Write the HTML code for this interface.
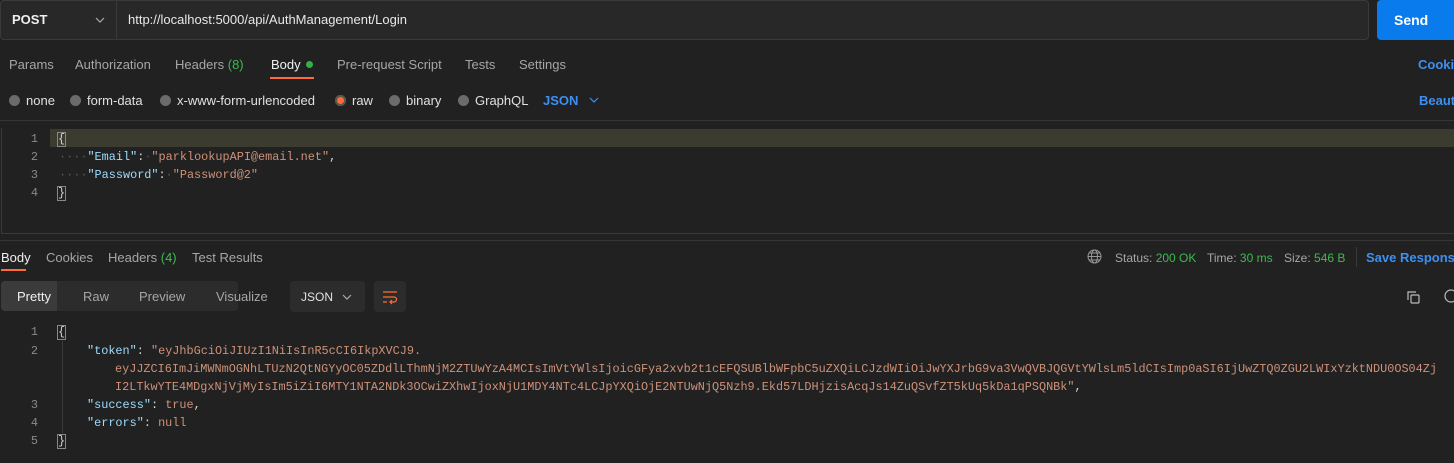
<!DOCTYPE html>
<html><head><meta charset="utf-8"><style>
*{margin:0;padding:0;box-sizing:border-box}
body{width:1454px;height:463px;background:#212121;overflow:hidden;position:relative;font-family:"Liberation Sans",sans-serif;font-size:13px;color:#a6a6a6}
.a{position:absolute;white-space:nowrap}
.mono{font-family:"Liberation Mono",monospace;font-size:11.85px}
.ln{position:absolute;width:38px;text-align:right;color:#8a8a8a;font-family:"Liberation Mono",monospace;font-size:11.85px}
.k{color:#9cdcfe}.s{color:#ce9178}.p{color:#d4d4d4}.dot{color:#555}
.rad{display:inline-block;width:11px;height:11px;border-radius:50%;background:#6b6b6b;vertical-align:-1px;margin-right:6px}
.brace{display:inline-block;border:1px solid #888;line-height:13px;color:#d4d4d4}
</style></head><body>
<!-- top bar -->
<div class="a" style="left:0;top:0;width:117px;height:40px;background:#282828;border:1px solid #3a3a3a;border-radius:4px 0 0 4px"></div>
<div class="a" style="left:12px;top:12px;color:#f0f0f0;font-weight:bold;font-size:13px">POST</div>
<svg class="a" style="left:95px;top:16px" width="10" height="8"><path d="M1 2l4 4 4-4" stroke="#aaa" fill="none" stroke-width="1.2"/></svg>
<div class="a" style="left:116px;top:0;width:1253px;height:40px;background:#282828;border:1px solid #3a3a3a;border-radius:0 4px 4px 0"></div>
<div class="a" style="left:128px;top:12px;color:#e8e8e8;font-size:13px">http://localhost:5000/api/AuthManagement/Login</div>
<div class="a" style="left:1377px;top:0;width:80px;height:40px;background:#097bed;border-radius:4px"></div>
<div class="a" style="left:1394px;top:12px;color:#fff;font-weight:bold;font-size:14px">Send</div>
<!-- tabs -->
<div class="a" style="left:9px;top:57px">Params</div>
<div class="a" style="left:75px;top:57px">Authorization</div>
<div class="a" style="left:175px;top:57px">Headers <span style="color:#3fb950">(8)</span></div>
<div class="a" style="left:271px;top:57px;color:#f0f0f0">Body <span style="display:inline-block;width:7px;height:7px;border-radius:50%;background:#2fb344;vertical-align:1px;margin-left:2px"></span></div>
<div class="a" style="left:228px;top:77px;width:0"></div>
<div class="a" style="left:270px;top:77px;width:44px;height:2px;background:#ff6c37"></div>
<div class="a" style="left:337px;top:57px">Pre-request Script</div>
<div class="a" style="left:465px;top:57px">Tests</div>
<div class="a" style="left:519px;top:57px">Settings</div>
<div class="a" style="left:1418px;top:57px;color:#3d8ff2;font-weight:bold">Cookies</div>
<!-- radios -->
<div class="a" style="left:9px;top:93px;color:#e0e0e0"><span class="rad"></span>none</div>
<div class="a" style="left:70px;top:93px;color:#e0e0e0"><span class="rad"></span>form-data</div>
<div class="a" style="left:160px;top:93px;color:#e0e0e0"><span class="rad"></span>x-www-form-urlencoded</div>
<div class="a" style="left:335px;top:93px;color:#e0e0e0"><span class="rad" style="background:#ff6c37;box-shadow:0 0 0 2px #555 inset"></span>raw</div>
<div class="a" style="left:389px;top:93px;color:#e0e0e0"><span class="rad"></span>binary</div>
<div class="a" style="left:458px;top:93px;color:#e0e0e0"><span class="rad"></span>GraphQL</div>
<div class="a" style="left:543px;top:93px;color:#3d8ff2;font-weight:bold">JSON</div>
<svg class="a" style="left:589px;top:96px" width="10" height="8"><path d="M1 2l4 4 4-4" stroke="#3d8ff2" fill="none" stroke-width="1.2"/></svg>
<div class="a" style="left:1419px;top:93px;color:#3d8ff2;font-weight:bold">Beautify</div>
<div class="a" style="left:0;top:120px;width:1454px;height:1px;background:#353535"></div>
<!-- editor -->
<div class="a" style="left:1px;top:128px;width:1px;height:106px;background:#3a3a3a"></div>
<div class="a" style="left:1px;top:233px;width:1453px;height:1px;background:#3a3a3a"></div>
<div class="a" style="left:0;top:240px;width:1454px;height:1px;background:#353535"></div>
<div class="a" style="left:50px;top:129px;width:1404px;height:18px;background:#3c3b30"></div>
<div class="ln" style="top:132px">1</div>
<div class="ln" style="top:150px">2</div>
<div class="ln" style="top:168px">3</div>
<div class="ln" style="top:186px">4</div>
<div class="a mono" style="left:57px;top:132px"><span class="brace">{</span></div>
<div class="a mono" style="left:59px;top:150px"><span class="dot">····</span><span class="k">"Email"</span><span class="p">:</span><span class="dot">·</span><span class="s">"parklookupAPI@email.net"</span><span class="p">,</span></div>
<div class="a mono" style="left:59px;top:168px"><span class="dot">····</span><span class="k">"Password"</span><span class="p">:</span><span class="dot">·</span><span class="s">"Password@2"</span></div>
<div class="a mono" style="left:57px;top:186px"><span class="brace">}</span></div>
<!-- response tabs -->
<div class="a" style="left:1px;top:250px;color:#f0f0f0">Body</div>
<div class="a" style="left:1px;top:269px;width:25px;height:2px;background:#ff6c37"></div>
<div class="a" style="left:46px;top:250px">Cookies</div>
<div class="a" style="left:108px;top:250px">Headers <span style="color:#3fb950">(4)</span></div>
<div class="a" style="left:192px;top:250px">Test Results</div>
<svg class="a" style="left:1087px;top:249px" width="15" height="15" fill="none" stroke="#999" stroke-width="1"><circle cx="7.5" cy="7.5" r="6.5"/><ellipse cx="7.5" cy="7.5" rx="3" ry="6.5"/><path d="M1 7.5h13M2 4h11M2 11h11"/></svg>
<div class="a" style="left:1115px;top:251px;font-size:12px">Status: <span style="color:#3fb950">200 OK</span></div>
<div class="a" style="left:1207px;top:251px;font-size:12px">Time: <span style="color:#3fb950">30 ms</span></div>
<div class="a" style="left:1284px;top:251px;font-size:12px">Size: <span style="color:#3fb950">546 B</span></div>
<div class="a" style="left:1356px;top:247px;width:1px;height:20px;background:#3a3a3a"></div>
<div class="a" style="left:1366px;top:250px;color:#3d8ff2;font-weight:bold">Save Response</div>
<!-- toolbar -->
<div class="a" style="left:1px;top:281px;width:237px;height:30px;background:#2c2c2c;border-radius:4px"></div>
<div class="a" style="left:1px;top:281px;width:56px;height:30px;background:#3b3b3b;border-radius:4px 0 0 4px"></div>
<div class="a" style="left:17px;top:289px;color:#f0f0f0">Pretty</div>
<div class="a" style="left:83px;top:289px">Raw</div>
<div class="a" style="left:139px;top:289px">Preview</div>
<div class="a" style="left:216px;top:289px">Visualize</div>
<div class="a" style="left:290px;top:281px;width:75px;height:31px;background:#2c2c2c;border-radius:4px"></div>
<div class="a" style="left:301px;top:290px;color:#e0e0e0;font-size:12px">JSON</div>
<svg class="a" style="left:342px;top:293px" width="10" height="8"><path d="M1 2l4 4 4-4" stroke="#aaa" fill="none" stroke-width="1.2"/></svg>
<div class="a" style="left:374px;top:281px;width:32px;height:31px;background:#2c2c2c;border-radius:4px"></div>
<svg class="a" style="left:381px;top:289px" width="18" height="16" fill="none" stroke="#ff6c37" stroke-width="1.2"><path d="M2 3h14M2 8h11a2.5 2.5 0 010 5H9M11 11l-2 2 2 2M2 13h4"/></svg>
<svg class="a" style="left:1405px;top:289px" width="16" height="16" fill="none" stroke="#bbb" stroke-width="1.2"><path d="M3 11V3h8"/><rect x="6" y="6" width="8" height="8" rx="1"/></svg>
<svg class="a" style="left:1443px;top:289px" width="12" height="16" fill="none" stroke="#bbb" stroke-width="1.2"><circle cx="8" cy="7" r="6"/></svg>
<!-- response code -->
<div class="ln" style="top:325px">1</div>
<div class="ln" style="top:344px">2</div>
<div class="ln" style="top:398px">3</div>
<div class="ln" style="top:416px">4</div>
<div class="ln" style="top:434px">5</div>
<div class="a" style="left:62px;top:341px;width:1px;height:92px;background:#3a3a3a"></div>
<div class="a mono" style="left:57px;top:325px"><span class="brace">{</span></div>
<div class="a mono" style="left:87px;top:344px"><span class="k">"token"</span><span class="p">: </span><span class="s">"eyJhbGciOiJIUzI1NiIsInR5cCI6IkpXVCJ9.</span></div>
<div class="a mono s" style="left:115px;top:362px">eyJJZCI6ImJiMWNmOGNhLTUzN2QtNGYyOC05ZDdlLThmNjM2ZTUwYzA4MCIsImVtYWlsIjoicGFya2xvb2t1cEFQSUBlbWFpbC5uZXQiLCJzdWIiOiJwYXJrbG9va3VwQVBJQGVtYWlsLm5ldCIsImp0aSI6IjUwZTQ0ZGU2LWIxYzktNDU0OS04Zj</div>
<div class="a mono" style="left:115px;top:380px"><span class="s">I2LTkwYTE4MDgxNjVjMyIsIm5iZiI6MTY1NTA2NDk3OCwiZXhwIjoxNjU1MDY4NTc4LCJpYXQiOjE2NTUwNjQ5Nzh9.Ekd57LDHjzisAcqJs14ZuQSvfZT5kUq5kDa1qPSQNBk"</span><span class="p">,</span></div>
<div class="a mono" style="left:87px;top:398px"><span class="k">"success"</span><span class="p">: </span><span class="s">true</span><span class="p">,</span></div>
<div class="a mono" style="left:87px;top:416px"><span class="k">"errors"</span><span class="p">: </span><span class="s">null</span></div>
<div class="a mono" style="left:57px;top:434px"><span class="brace">}</span></div>
</body></html>
